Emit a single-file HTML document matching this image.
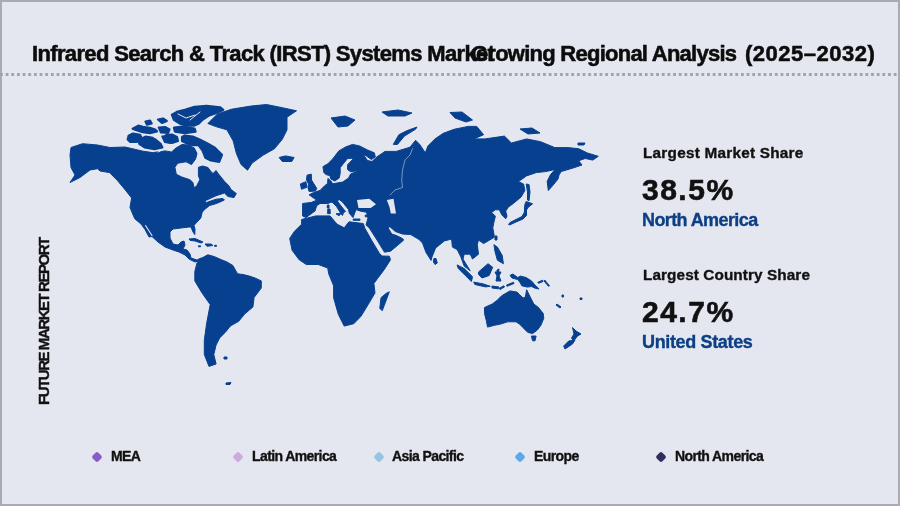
<!DOCTYPE html>
<html><head><meta charset="utf-8">
<style>
html,body{margin:0;padding:0;}
body{width:900px;height:506px;overflow:hidden;background:#a9abb4;position:relative;font-family:"Liberation Sans",sans-serif;}
#card{position:absolute;left:2px;top:2px;width:896px;height:502px;background:#e4e7f0;}
.abs{position:absolute;white-space:nowrap;-webkit-text-stroke:0.35px currentColor;will-change:transform;}
.t1{-webkit-text-stroke:0.55px currentColor;font-weight:bold;font-size:22px;letter-spacing:-0.35px;color:#0c0c0c;top:41px;}
.dots{position:absolute;left:0px;top:73px;width:898px;height:3px;background-image:linear-gradient(90deg,#a2a4aa 3px,transparent 3px);background-size:5.67px 3px;}
#map{position:absolute;left:0;top:0;}
.lbl{font-weight:bold;font-size:15.3px;letter-spacing:0.25px;color:#111;}
.big{-webkit-text-stroke:0.6px currentColor;font-weight:bold;font-size:30px;letter-spacing:1.5px;color:#111;}
.reg{font-weight:bold;font-size:18px;letter-spacing:-0.6px;color:#0d3f85;}
.leg{font-weight:bold;font-size:14px;letter-spacing:-0.6px;color:#111;top:448px;}
.dia{position:absolute;width:8px;height:8px;transform:rotate(45deg);border-radius:2px;top:452.5px;}
.vert{font-weight:bold;font-size:15px;letter-spacing:-1.45px;color:#111;transform-origin:0 0;transform:rotate(-90deg);left:34.5px;top:405px;}
</style></head><body>
<div id="card"></div>
<svg id="map" width="900" height="506" viewBox="0 0 900 506">
<g fill="#084090" stroke="#084090" stroke-width="1" stroke-linejoin="round">
<polygon points="71,147.5 82.5,143.7 97.5,145 110,147.5 125,147 143,151.2 152.7,152.6 165,150.9 171.5,152 176,148 182,144.5 188,145 194.3,148 197,153.5 195.6,159 191.5,164.6 186,161.8 177.7,163.2 174.9,167.3 176.3,174.3 181.8,177 190.1,179.8 192.9,182.6 194.3,188.1 197,185.3 199.8,179.8 198.4,175.6 198.4,167.3 202.6,166 208,167.5 210.5,171 213,173.5 216,170.5 218.5,173.9 224.4,181.3 228.9,185.7 231,189.5 236.3,193.5 234,197.6 228,196.5 224.4,193 216,195.8 204.5,201 206.5,202.5 216,199.2 223,198.5 224.4,200 220,202 215.6,203.8 209.6,205.5 204,210 202.2,212.4 200.7,218.3 196.3,222.8 194,225.5 195,229 194.8,234.6 193,232 191,227 189,227 181,228 173,229 170,232 170,238 173,244 178,245 181,242 184,241 185,245 183,249 187,250 190,254 191,258 197,260 201,258 202.5,258.7 199,261 195,262 189,259 185,255 179,252 173,250 165,247 158,242 152,236.5 149,237 145,229.5 141,224 135,219 133.2,215.3 130,207.4 131.6,198 125.3,190 117.4,180.5 109.5,172.6 100,171 97.5,168.7 90,170 80,177.5 70,182.5 75,175 71,167.5 70,155"/>
<polygon points="207.9,123.5 217.4,114 231.6,109.2 250.6,106.1 266.5,104.5 282.3,107.7 296.5,110.8 287,117.2 287,129.8 282.3,139.3 274.4,148.8 263.3,155.1 252.2,163 247.5,170.2 241.1,164.6 236.4,153.5 233.2,140.9 226.9,129.8 215.8,126.6"/>
<polygon points="279.1,157.5 285.4,155.9 294.1,157.5 291.8,161.5 282.3,161.5"/>
<polygon points="189,239 195,238.5 203,242 201,243 195,241 190,240.3"/>
<polygon points="205,244 211,244 213,245.5 207,246.3"/>
<polygon points="201,258.5 207.8,254.8 214,256.5 220.9,259.5 227,262 232.8,265.4 237.5,273.8 243,274.5 249.4,276.1 255,278 261.3,280.9 261.3,288 254.1,297.5 252.9,307 244.6,314.1 238.7,321.3 230.4,326 225.6,332 219.7,337.9 216.1,345 213.8,354.5 216.1,364 209,366.4 204.3,354.5 204.3,340.3 206.6,323.6 210.2,304.6 201.9,292.8 194.8,280.9 194.8,271.4 197,263"/>
<polygon points="302.6,216 302.6,203.5 311.3,202.4 316.7,200.2 309.1,194.8 313.5,192.6 320,190.4 324.3,186.1 327.6,183.4 327.9,178.5 330.5,180.5 332.8,183.8 342.7,182 348.6,178 350.6,174 358.5,170.6 350.6,171.8 347.6,169.6 347.6,164.7 352.6,159.5 351.6,158.3 347.6,158.5 343.7,163.2 340.2,167.7 340.2,173.6 339.2,178 334.8,181 330.8,179 329.9,175.6 325.9,174.6 323.9,172.6 322.9,166.7 327.9,163.7 332.8,158.8 338.8,150.9 345.7,146.9 352.6,144.4 359.5,145.9 367.4,149.9 374.3,152.8 375.3,156.8 371.4,159.5 366.4,156 363.5,154.8 367.5,160.5 372,161.5 376.7,157 385,151.4 396.1,151.4 410,147.2 415.6,140.3 419.7,144.4 425.3,152.8 428,145.8 435,138.9 443.3,133.3 454.4,129.2 468.3,126.4 476.7,126.4 483.6,134.7 473.9,138.9 485,138.9 504.4,136.1 511.4,143 526.7,138.9 540.6,141.7 554.8,147.6 567.8,147.6 578.7,148.7 587.4,153 598.3,156.3 592.8,160.1 585.2,158.5 578.7,160.7 582,165 572.2,168.3 561.3,171.5 559.1,174.8 558,179.1 552.6,185.7 548.3,190.5 547.2,181.3 550.4,174.8 555,169.5 546.1,171.5 536.3,172.6 526.5,175.9 518.5,181.6 523.6,184.1 524.9,190.5 521.1,197 513.4,203.4 508.2,207.2 505.7,211.1 507,216.2 505.7,218.8 501.8,214.9 499.3,209.8 495.4,209.8 491.6,212.4 495.4,216.2 494.1,221.3 492.8,227.8 494.1,235 494.2,237.3 483.6,243.6 478.5,240 477.3,244.7 478.5,254.2 472.5,259 470.2,254.2 464.2,254.2 463,259 466.6,264.9 470.2,270.8 464.2,266.1 460.7,256.6 457.1,249.5 452.4,247.1 451.6,239.1 444.4,240.9 435.6,248 432,256.9 431.1,260.4 426,252.4 422.5,243 419,239.4 410.7,234.6 402.4,234 395.3,231.5 389.4,226.3 388.5,228.5 391.7,234 396.5,235.5 402.4,238.5 403.8,240 397.7,245.3 390.5,251.2 384.5,252.2 377,240 369,227.5 366,225 368,218 366.6,212.3 360,211 356,209.6 353,217.6 349.3,213.3 348.5,209.5 342.5,202 339.5,199.8 337,200.5 341,206 345.5,211.5 343.5,212.5 342.5,215.5 340.5,213 336.5,206.5 332,202 327.6,203.5 320,203.5 316.7,205.7 315,211 306,217.6"/>
<polygon points="301.6,219.5 315.8,215.9 330,215.9 337.1,224.2 344.2,227.8 349,221.8 363.2,223.5 365,228.5 372,241 379.5,253.5 382.2,256 389.3,256.2 390.5,259.8 384.5,269.2 377.4,278.7 373.9,283.5 375,293 368,304.8 360.8,316.6 353.7,323.7 344.2,326.1 338.3,314.3 333.6,297.7 333.6,285.8 328.8,274 327.7,268 318.2,264.5 306.3,264.5 299.2,259.8 292.1,250.3 289.7,238.4 294.5,231.3 301.6,224.2"/>
<polygon points="331,118 345,116 355,120 348,126 338,127"/>
<polygon points="382,112 398,110 412,113 405,116 388,116"/>
<polygon points="393.3,144.4 398.9,134.7 407.2,130.6 417,127 415.6,129.2 404.4,136.1 397.5,144.4"/>
<polygon points="450,112.5 462,112 472.5,120 466,122 455,118"/>
<polygon points="520,129 532,128 540,133 528,134"/>
<polygon points="578,143 585,143 584,145 578,145"/>
<polygon points="307,175.2 311.3,174.1 311.5,180 314.6,185 316.7,188.3 315.5,191 309.1,191.5 308,188 308.5,184 306.5,180"/>
<polygon points="300.4,183.9 305.9,181.7 307,187.2 301.5,189.3"/>
<polygon points="526.2,201.5 532.6,203.8 528,207.5 526.5,210 526.5,215.5 523,219 516,222 510,224.8 508.5,224.5 510,222.5 516,219.5 522,216.5 524.5,212 524.5,208 525,204"/>
<polygon points="526.2,184 529,184.5 530,192 529,200.8 527.5,200 527.5,192"/>
<polygon points="495,236 497,236 497,240 495,240"/>
<polygon points="493.9,244.7 497.4,247.1 502.2,255.4 503.4,263.7 497.4,260.2 495.1,251.9"/>
<polygon points="433.8,258.7 436,258.5 437.3,263 435,264.5 433.5,262"/>
<polygon points="478.5,272 488,263.7 492.7,267.3 489.1,275.6 482,278 478.5,274.4"/>
<polygon points="457.1,264.9 464.2,268.5 472.5,276.8 471.4,281.5 465.4,275.6 458.3,268.5"/>
<polygon points="473.7,282.1 483.2,283.9 490.3,286.3 485.6,286.9 474.9,284.5"/>
<polygon points="495,272 501,272 499,276 501,281 496,281 497,276"/>
<polygon points="510,275.4 512.8,274 514.9,275.4 517.7,277.5 520.4,276.1 526,277.5 531.5,280.9 535,285.1 539.1,288.9 535.7,288.5 531.5,286.5 527.4,287.1 521.8,285.8 520.4,283 517.7,279.5 514.9,278.8 512.1,278.1"/>
<polygon points="484.5,307.5 492.2,304 497,300.4 501.7,295.7 510,290.9 517.1,292.1 519.5,294.5 523.1,298 525.4,296.9 526.6,289.7 530.2,296.9 533.8,304 538.5,307.5 543.2,313.5 543.8,318.2 540.9,325.3 537.3,330.1 532.6,333.6 527.8,332.4 523.1,327.7 519.5,324.1 516,321.8 507.7,321.8 500.5,324.1 494.6,325.3 487.5,327.1 486.3,320.6 484.5,313.5"/>
<polygon points="531.4,336 536.1,336 535,340.8 532.6,340.8"/>
<polygon points="572.5,327.5 576,331 581,334 577.5,336 573.7,341 571.5,338 574,334"/>
<polygon points="575,340 572.5,344 565,349 563.7,346 568.7,341"/>
<polygon points="492,286 499,287 498.5,288.8 492,288"/>
<polygon points="499,288.5 503.8,285.8 504.5,287 500,289.5"/>
<polygon points="506.6,285 513.5,282.3 514,283.5 507,286.3"/>
<polygon points="537.8,282.3 542.6,280.2 543,281.5 538.5,283.3"/>
<polygon points="544.7,280 549.5,285.8 548.5,286.3 544,281"/>
<polygon points="497,270 499,269 498.5,273 497,273"/>
<polygon points="214.5,245.3 216.5,245.3 216.5,246.3 214.5,246.3"/>
<polygon points="198.5,245.8 200.5,245.8 200.5,246.8 198.5,246.8"/>
<polygon points="224,357 227,357 227,359 224,359"/>
<polygon points="226,383 231,382.5 230,384.5 226,384.5"/>
<polygon points="562,295 563.5,295 563.5,297 562,297"/>
<polygon points="580,298 582,298 582,299.5 580,299.5"/>
<polygon points="557,304 561,307 560,308 556,305"/>
<polygon points="327.8,209 330,209 330.3,213.6 327.6,213.6"/>
<polygon points="327.3,205 329,205 329,208 327.3,208"/>
<polygon points="336,213.8 341,213.4 339,215.8"/>
<polygon points="353.2,219 360,219 360,220.3 353.2,220.3"/>
<polygon points="365.3,215 369.3,215 369.3,216.8 365.3,216.8"/>
<polygon points="389.3,291.8 384.5,304.8 382.2,310.7 379.8,308.3 381,297.7 386,293.5"/>
<g stroke-width="2.2"><polygon points="171.9,114.8 176.9,111.9 184.8,109.9 194.6,106.9 206.5,105.9 220.3,107.4 223.3,109.9 214.4,113.8 208.5,115.8 202.5,119.8 198.6,123.7 193.7,125.7 186.7,125.7 179.8,123.7 173.9,119.8"/>
<polygon points="182,137 184.8,135.6 192.7,136.6 199.6,139.5 207.5,143.5 214.4,147.4 222,154.9 219.2,161.8 210.9,160.4 205.3,157.7 202.6,150.7 198.4,145.2 191.5,145.2 186,143 182,141"/>
<polygon points="166,135 172,134.5 177,137 178,141 172,143 167,141"/>
<polygon points="128.6,135.8 133,133.6 140.1,134.9 141.9,138.5 136.6,142 130.3,142 127.7,139.4"/>
<polygon points="139.2,139.4 145.5,136.7 151.7,137.6 155.2,139.4 160.6,143.8 162.4,147.4 154.4,149.1 144.6,147.4 139.2,143.8"/>
<polygon points="132.6,128.7 138.3,125.6 142.8,126.9 149.9,127.8 155.2,129.6 157,131.4 149.9,133.1 142.8,132.2 135.7,130"/>
<polygon points="145.5,121.5 150,120.5 151.7,123.5 147,124.7"/>
<polygon points="158.8,127.5 165,127 169.5,129.5 168,133 161,132.5"/>
<polygon points="158,119.5 163,118.5 166.8,121 162,123"/>
<polygon points="162.4,136.5 167,135.8 171.3,138 170,142.9 165,142"/>
<polygon points="173.9,127.7 182.8,126.7 194.6,128.7 195.6,131.6 184.8,133.1 174.9,131.6"/>
<polygon points="180,156 185,155.5 187,158.5 182,159.5"/></g>
</g>
<g fill="#e4e7f0">
<polygon points="357,200 369.3,198.8 376,204.2 370.6,208 358.5,208"/>
<polygon points="386.8,200 393.5,198.8 396,213.6 390.8,213.6 389.5,207"/>
</g>
<g fill="none" stroke="#e4e7f0" stroke-linejoin="round" stroke-linecap="round">
<polyline points="145.5,225.5 152,235.5" stroke-width="1.1"/>
<polyline points="412.5,148.7 410,155 405,160 402.5,170 401.7,180 402.5,187.5 395,190 390,195" stroke-width="0.5"/>
<polyline points="178,114 186,118 195,115" stroke-width="1.0"/>
<polyline points="190,120 200,112" stroke-width="1.0"/>
<polyline points="158,152 165,149" stroke-width="1.0"/>
</g>
</svg>
<div class="abs t1" style="left:32px;letter-spacing:-0.65px;">Infrared Search &amp; Track (IRST) Systems Market</div>
<div class="abs t1" style="left:471px;letter-spacing:-0.75px;">Growing Regional Analysis</div><div class="abs t1" style="left:745px;letter-spacing:0.5px;">(2025–2032)</div>
<div class="dots"></div>

<div class="abs lbl" style="left:643px;top:144px;">Largest Market Share</div>
<div class="abs big" style="left:642px;top:173px;">38.5%</div>
<div class="abs reg" style="left:642px;top:210px;">North America</div>
<div class="abs lbl" style="left:643px;top:266px;letter-spacing:0.1px;">Largest Country Share</div>
<div class="abs big" style="left:642px;top:295px;">24.7%</div>
<div class="abs reg" style="left:642px;top:332px;letter-spacing:-0.35px;">United States</div>

<div class="abs vert">FUTURE MARKET REPORT</div>

<div class="dia" style="left:92.5px;background:#8a5cc6;"></div>
<div class="abs leg" style="left:111px;">MEA</div>
<div class="dia" style="left:233.5px;background:#cfa8dc;"></div>
<div class="abs leg" style="left:252px;">Latin America</div>
<div class="dia" style="left:374.5px;background:#94c5e3;"></div>
<div class="abs leg" style="left:392px;">Asia Pacific</div>
<div class="dia" style="left:515.5px;background:#5aaae6;"></div>
<div class="abs leg" style="left:534px;">Europe</div>
<div class="dia" style="left:656.5px;background:#2e2f5f;"></div>
<div class="abs leg" style="left:675px;">North America</div>
</body></html>
